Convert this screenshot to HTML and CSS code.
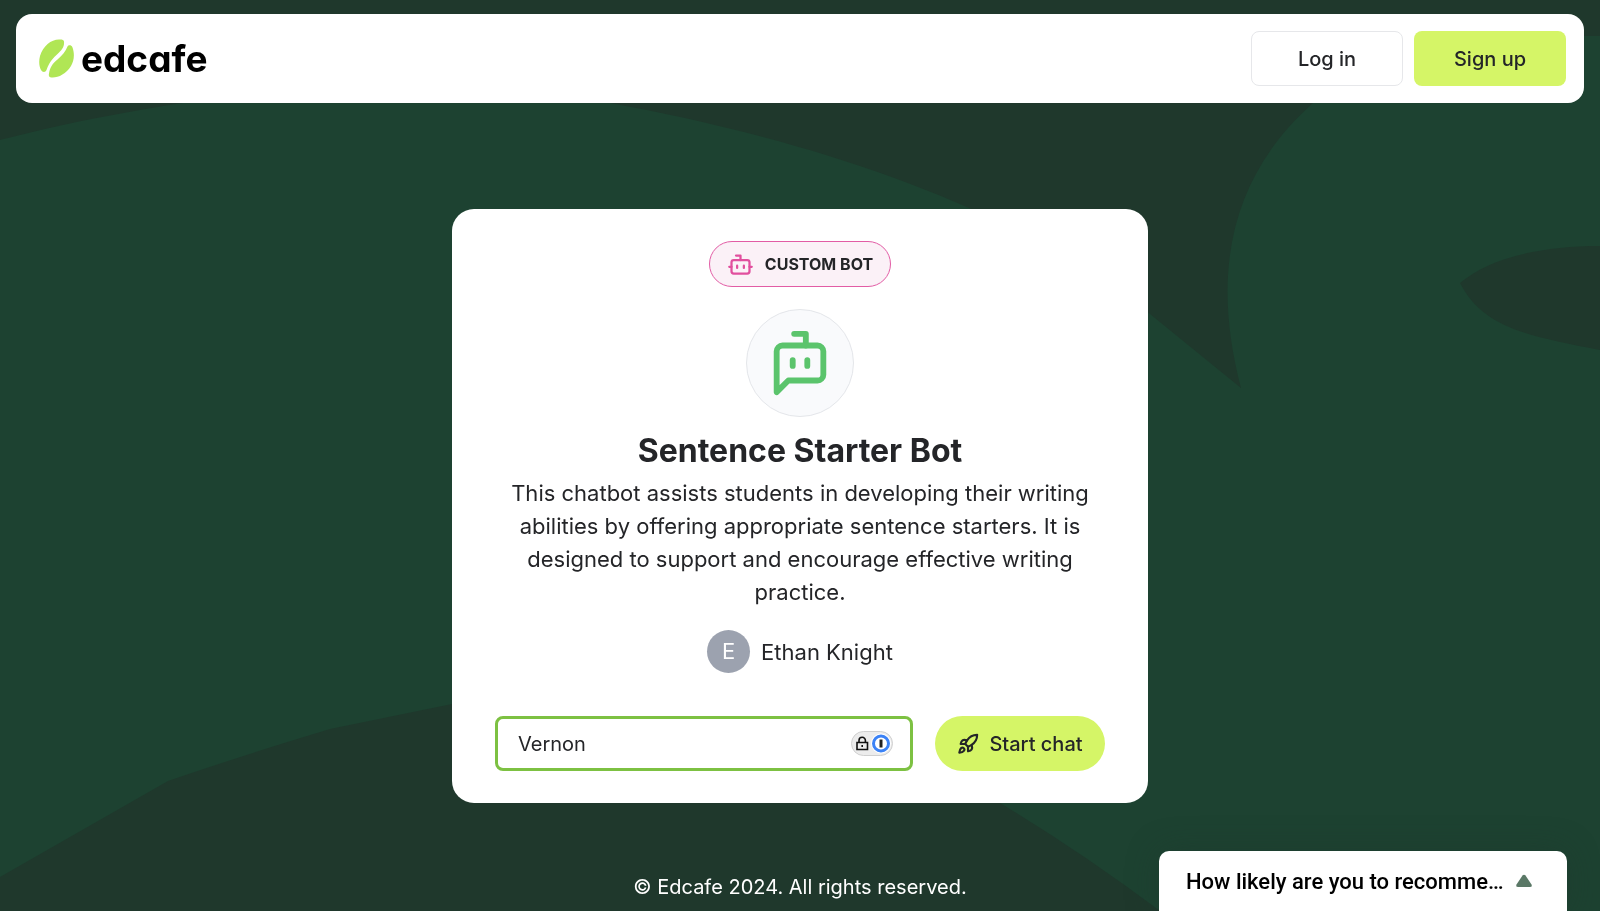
FILE: index.html
```html
<!DOCTYPE html>
<html lang="en">
<head>
  <meta charset="UTF-8" />
  <meta name="viewport" content="width=device-width, initial-scale=1.0" />
  <title>Sentence Starter Bot - Edcafe</title>
  <link rel="stylesheet" href="styles.css">
</head>
<body>
  <svg class="backdrop" viewBox="0 0 1600 911" preserveAspectRatio="xMidYMid slice" aria-hidden="true">
    <path class="leaf" d="M0 140C130 106 290 84 400 84C490 84 550 93 610 103C780 134 1000 195 1150 314L1241 388C1210 270 1232 175 1313 103C1370 56 1450 36 1540 36H1600V911H0Z" />
    <path class="shade" d="M1460 283C1490 258 1540 246 1600 246V350C1520 335 1482 325 1460 283Z" />
    <path class="shade" d="M0 877L168 781Q250 753 330 729L452 704C640 668 820 700 1000 803Q1080 851 1160 911H0Z" />
  </svg>

  <header class="topbar">
    <a class="logo" href="#" aria-label="edcafe">
      <svg class="logo-bean" viewBox="0 0 35 39" aria-hidden="true">
        <path d="M25 2.500C25.500 8 23 11 18 15.500C11 21.500 9 27 7.500 31C6.500 33.500 3.500 33.500 2 31C0 27.500-.3 22 1 17C4 7 12 .5 20 .5C23 .3 24.700.8 25 2.500Z" />
        <path d="M28.500 7.500C29.500 5.500 32.500 6 33.300 8C36 15 35 22 32 27C27 35 19 39 12.500 38.500C10 38.300 9.500 37 10 34.500C11 28.500 13.500 24.500 18.500 20.500C23.500 16 26.500 12.500 28.500 7.500Z" />
      </svg>
      <span class="logo-name">edcafe</span>
    </a>
    <nav class="actions">
      <button class="btn btn-outline" type="button">Log in</button>
      <button class="btn btn-lime" type="button">Sign up</button>
    </nav>
  </header>

  <main class="content">
    <section class="card">
      <div class="badge">
        <svg class="badge-icon" viewBox="0 0 24 24" aria-hidden="true">
          <path d="M12 8V4H8" />
          <rect x="4" y="8" width="16" height="12" rx="2" />
          <path d="M2 14h2M20 14h2M15 13v2M9 13v2" />
        </svg>
        Custom bot
      </div>

      <div class="bot-avatar">
        <svg viewBox="0 0 24 24" aria-hidden="true">
          <path d="M14 6V2h-4" />
          <path d="m8 18-4 4V8a2 2 0 0 1 2-2h12a2 2 0 0 1 2 2v8a2 2 0 0 1-2 2Z" />
          <path d="M9.500 11v2M14.500 11v2" />
        </svg>
      </div>

      <h1>Sentence Starter Bot</h1>
      <p class="description">This chatbot assists students in developing their writing abilities by offering appropriate sentence starters. It is designed to support and encourage effective writing practice.</p>

      <div class="author">
        <span class="author-initial">E</span>
        <span>Ethan Knight</span>
      </div>

      <form class="start-form">
        <div class="name-field">
          <input type="text" value="Vernon" aria-label="Your name" />
          <svg class="autofill" viewBox="0 0 42 25" aria-hidden="true">
            <rect class="autofill-pill" x="0.500" y="0.500" width="41" height="24" rx="12" />
            <path class="autofill-lock" d="M6 11.500h10.500v7H6zM8 11.500V9.500a3.200 3.200 0 0 1 6.400 0v2M11.200 14v2" />
            <circle class="autofill-disc" cx="30" cy="12.500" r="10" />
            <circle class="autofill-ring" cx="30" cy="12.500" r="7.500" />
            <path class="autofill-key" d="M30 8.500v8" />
          </svg>
        </div>
        <button class="btn btn-lime btn-start" type="submit">
          <svg class="btn-icon" viewBox="0 0 24 24" aria-hidden="true">
            <path d="M4.500 16.500c-1.500 1.260-2 5-2 5s3.740-.5 5-2c.71-.84.7-2.130-.09-2.910a2.180 2.180 0 0 0-2.910-.09z" />
            <path d="m12 15-3-3a22 22 0 0 1 2-3.950A12.880 12.880 0 0 1 22 2c0 2.720-.78 7.500-6 11a22.350 22.350 0 0 1-4 2z" />
            <path d="M9 12H4s.55-3.030 2-4c1.620-1.080 5 0 5 0" />
            <path d="M12 15v5s3.030-.55 4-2c1.080-1.620 0-5 0-5" />
          </svg>
          Start chat
        </button>
      </form>
    </section>
  </main>

  <footer class="footer">© Edcafe 2024. All rights reserved.</footer>

  <button class="survey" type="button">
    <span class="survey-title">How likely are you to recomme…</span>
    <svg class="survey-arrow" viewBox="0 0 18 14" aria-hidden="true">
      <path d="M7.500 1.500Q9 0 10.500 1.500L16.500 10.500Q17.500 13 15 13H3Q.5 13 1.500 10.500Z" />
    </svg>
  </button>
</body>
</html>
```

FILE: styles.css
```css
* {
  box-sizing: border-box;
}
body {
  margin: 0;
  min-height: 100vh;
  display: flex;
  flex-direction: column;
  font-family: Inter, sans-serif;
  font-size: 20px;
  color: #242528;
  background: #1f382c;
}
button,
input {
  font: inherit;
  color: inherit;
}

/* background shapes */
.backdrop {
  position: fixed;
  inset: 0;
  width: 100%;
  height: 100%;
  z-index: -1;
}
.leaf {
  fill: #1d4231;
}
.shade {
  fill: #1f382c;
}

/* top bar */
.topbar {
  display: flex;
  align-items: center;
  justify-content: space-between;
  margin: 14px 16px 0;
  padding: 17px 18px 17px 23px;
  background: #fff;
  border-radius: 16px;
}
.logo {
  display: flex;
  align-items: center;
  gap: 7px;
  color: #000;
  text-decoration: none;
}
.logo-bean {
  width: 35px;
  height: 39px;
  fill: #b0e655;
}
.logo-name {
  font-size: 37px;
  font-weight: 700;
  line-height: 40px;
  font-feature-settings: "cv11";
}
.actions {
  display: flex;
  gap: 11px;
}
.btn {
  display: flex;
  align-items: center;
  justify-content: center;
  width: 152px;
  height: 55px;
  padding: 0;
  border: 1px solid transparent;
  border-radius: 8px;
  font-weight: 500;
  cursor: pointer;
}
.btn-outline {
  background: #fff;
  border-color: #e6e7ea;
}
.btn-lime {
  background: #d5f567;
}

/* card */
.content {
  display: flex;
  justify-content: center;
  margin-top: 106px;
}
.card {
  display: flex;
  flex-direction: column;
  align-items: center;
  width: 696px;
  max-width: 100%;
  padding: 32px 43px;
  background: #fff;
  border-radius: 22px;
}
.badge {
  display: flex;
  align-items: center;
  gap: 11px;
  height: 46px;
  padding: 0 17px;
  border: 1px solid #e25ca5;
  border-radius: 23px;
  background: #fbf1f7;
  font-size: 16px;
  font-weight: 700;
  text-transform: uppercase;
}
.badge svg,
.bot-avatar svg,
.btn-icon {
  fill: none;
  stroke: currentColor;
  stroke-width: 2;
  stroke-linecap: round;
  stroke-linejoin: round;
}
.badge .badge-icon {
  width: 27px;
  height: 27px;
  stroke: #e14f9e;
}
.bot-avatar {
  display: flex;
  align-items: center;
  justify-content: center;
  width: 108px;
  height: 108px;
  margin-top: 22px;
  border: 1px solid #e4e6ea;
  border-radius: 50%;
  background: #f9fafc;
}
.bot-avatar svg {
  width: 70px;
  height: 70px;
  stroke: #5bc46c;
}
h1 {
  margin: 13px 0 0;
  font-size: 32px;
  font-weight: 700;
  line-height: 42px;
}
.description {
  margin: 5px 0 0;
  font-size: 22px;
  line-height: 33px;
  text-align: center;
}
.author {
  display: flex;
  align-items: center;
  gap: 11px;
  margin-top: 21px;
  font-size: 22px;
}
.author-initial {
  width: 43px;
  height: 43px;
  border-radius: 50%;
  background: #9ca2af;
  color: #fff;
  line-height: 43px;
  text-align: center;
}
.start-form {
  display: flex;
  gap: 22px;
  width: 100%;
  margin-top: 43px;
}
.name-field {
  position: relative;
  flex: 1;
}
.name-field input {
  width: 100%;
  height: 55px;
  padding: 0 60px 0 20px;
  border: 3px solid #7dc142;
  border-radius: 8px;
  background: #fff;
  outline: none;
}
.autofill {
  position: absolute;
  right: 20px;
  top: 15px;
  width: 42px;
  height: 25px;
  fill: none;
  stroke-width: 2;
}
.autofill-pill {
  fill: #ececec;
  stroke: #cfcfcf;
  stroke-width: 1;
}
.autofill-lock {
  stroke: #111;
  stroke-width: 1.6;
}
.autofill-disc {
  fill: #fff;
}
.autofill-ring {
  stroke: #3b82f6;
  stroke-width: 3;
}
.autofill-key {
  stroke: #222;
  stroke-width: 3;
}
.btn-start {
  gap: 10px;
  width: 170px;
  border-radius: 28px;
}
.btn-icon {
  width: 22px;
  height: 22px;
  stroke-width: 2.3;
}

.footer {
  margin-top: 72px;
  color: #fff;
  line-height: 24px;
  text-align: center;
}

/* survey tab, docked to the bottom edge */
.survey {
  position: fixed;
  right: 33px;
  bottom: 0;
  display: flex;
  align-items: center;
  justify-content: space-between;
  width: 408px;
  height: 60px;
  padding: 0 34px 0 27px;
  border: 0;
  border-radius: 10px 10px 0 0;
  background: #fff;
  box-shadow: 0 0 32px rgba(31, 56, 44, 0.4);
  color: #000;
  font-family: Roboto, sans-serif;
  font-size: 22px;
  font-weight: 500;
}
.survey-title {
  white-space: nowrap;
}
.survey-arrow {
  width: 18px;
  height: 14px;
  fill: #5a7866;
}
```
